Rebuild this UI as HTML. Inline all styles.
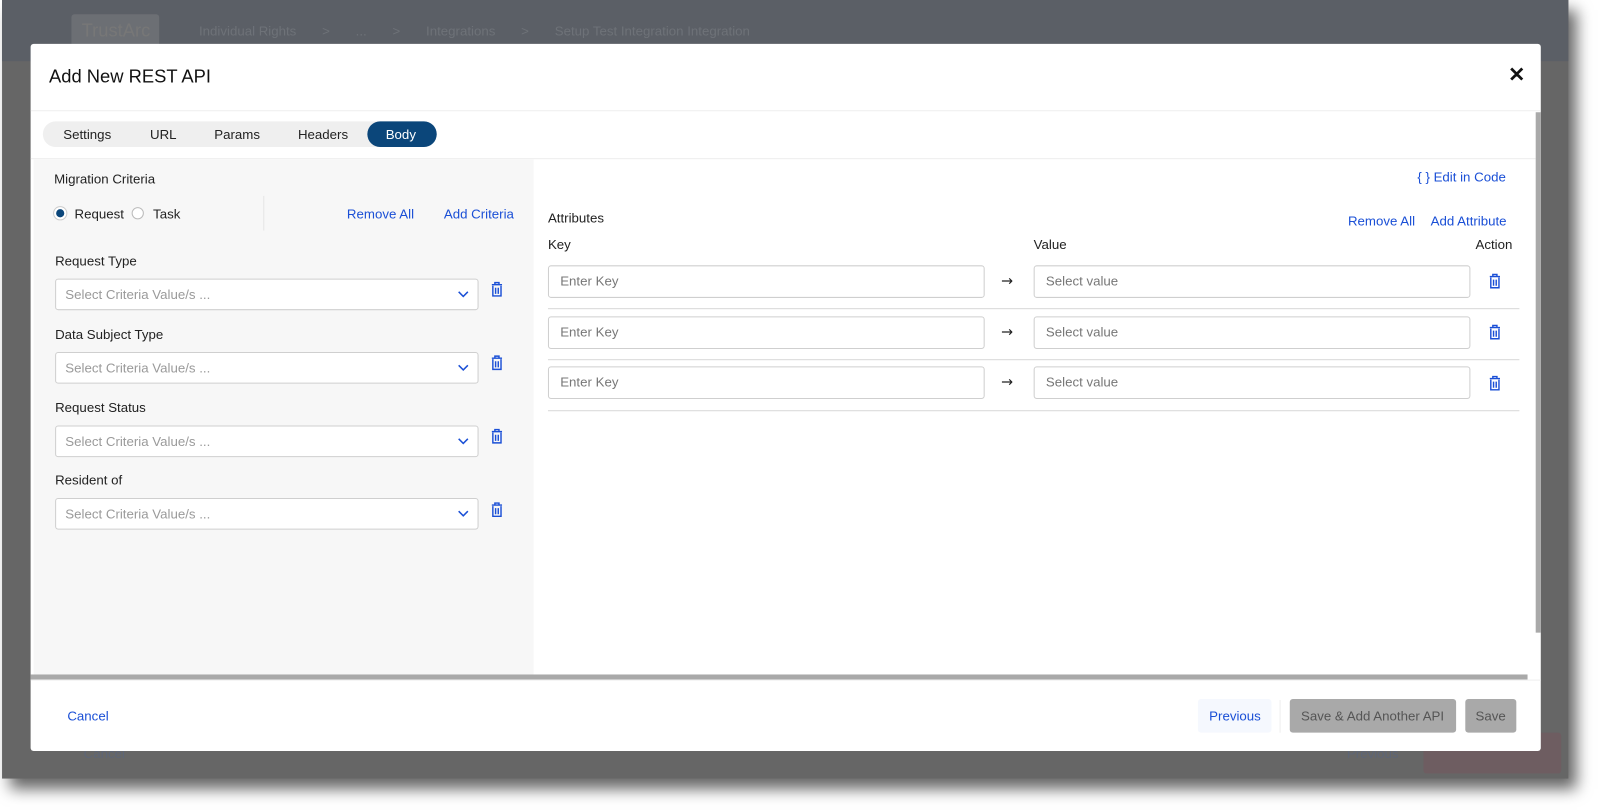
<!DOCTYPE html>
<html><head><meta charset="utf-8"><style>
html,body{margin:0;padding:0;width:1600px;height:810px;overflow:hidden;background:#fff;font-family:"Liberation Sans",sans-serif;}
#w{position:absolute;left:0;top:0;width:1568px;height:794px;transform:scale(1.0204);transform-origin:0 0;}
.a{position:absolute;}
.t{position:absolute;font-size:13px;color:#222;white-space:nowrap;line-height:16px;}
.b{color:#1a4fd6;}
.sel{position:absolute;background:#fff;border:1px solid #cfcfcf;border-radius:3px;box-sizing:border-box;}
.ph{position:absolute;left:9px;top:7px;font-size:13px;color:#9a9a9a;white-space:nowrap;}
.ar{position:absolute;font-family:"DejaVu Sans",sans-serif;font-size:14px;color:#222;line-height:16px;}
</style></head><body><div id="w">
<div class="a" style="left:2px;top:0;width:1535px;height:763px;background:#666;box-shadow:8px 10px 14px rgba(0,0,0,0.6);"></div>
<div class="a" style="left:2px;top:0;width:1535px;height:60px;background:#5b5f66;"></div>
<div class="a" style="left:70px;top:14px;width:86px;height:34px;background:#6c6f74;border-radius:3px;"></div>
<div class="t" style="left:80px;top:22px;font-size:18px;color:#777;">TrustArc</div>
<div class="t" style="left:195px;top:23px;color:#6e7278;">Individual Rights &nbsp;&nbsp;&nbsp;&nbsp;&nbsp;&nbsp;&gt; &nbsp;&nbsp;&nbsp;&nbsp;&nbsp;&nbsp;... &nbsp;&nbsp;&nbsp;&nbsp;&nbsp;&nbsp;&gt; &nbsp;&nbsp;&nbsp;&nbsp;&nbsp;&nbsp;Integrations &nbsp;&nbsp;&nbsp;&nbsp;&nbsp;&nbsp;&gt; &nbsp;&nbsp;&nbsp;&nbsp;&nbsp;&nbsp;Setup Test Integration Integration</div>
<div class="a" style="left:1395px;top:718px;width:135px;height:40px;background:#6e5d61;border-radius:3px;"></div>
<div class="t" style="left:1320px;top:731px;color:#5d6576;">Previous</div>
<div class="t" style="left:82px;top:731px;color:#5d6576;">Cancel</div>

<div class="a" style="left:30px;top:43px;width:1480px;height:693px;background:#fff;border-radius:3px;overflow:hidden;">
</div>
<div class="t" style="left:48px;top:65px;font-size:18px;line-height:20px;color:#111;">Add New REST API</div>
<div class="t" style="left:1478px;top:66px;font-size:20px;font-weight:bold;color:#111;">✕</div>
<div class="a" style="left:30px;top:108px;width:1480px;height:1px;background:#eee;"></div>
<div class="a" style="left:42px;top:119px;width:386px;height:25px;background:#efefef;border-radius:13px;"></div>
<div class="a" style="left:360px;top:119px;width:68px;height:25px;background:#0b467a;border-radius:13px;"></div>
<div class="t" style="left:62px;top:124px;">Settings</div>
<div class="t" style="left:147px;top:124px;">URL</div>
<div class="t" style="left:210px;top:124px;">Params</div>
<div class="t" style="left:292px;top:124px;">Headers</div>
<div class="t" style="left:378px;top:124px;color:#fff;">Body</div>
<div class="a" style="left:30px;top:155px;width:1475px;height:1px;background:#eee;"></div>
<div class="a" style="left:1505px;top:110px;width:5px;height:510px;background:#a9a9a9;"></div>
<div class="a" style="left:33px;top:156px;width:490px;height:505px;background:#f7f7f7;"></div>

<div class="t" style="left:53px;top:168px;">Migration Criteria</div>
<div class="a" style="left:53px;top:203px;width:12px;height:12px;border-radius:50%;background:#0b467a;box-shadow:0 0 0 1px #ccc;border:2px solid #fff;box-sizing:border-box;"></div>
<div class="t" style="left:73px;top:202px;">Request</div>
<div class="a" style="left:129px;top:203px;width:12px;height:12px;border-radius:50%;border:1px solid #bbb;background:#fff;box-sizing:border-box;"></div>
<div class="t" style="left:150px;top:202px;">Task</div>
<div class="a" style="left:258px;top:192px;width:1px;height:34px;background:#e6e6e6;"></div>
<div class="t b" style="left:340px;top:202px;">Remove All</div>
<div class="t b" style="left:435px;top:202px;">Add Criteria</div>

<div class="t" style="left:54px;top:248px;">Request Type</div>
<div class="sel" style="left:54px;top:273px;width:415px;height:31px;"><div class="ph">Select Criteria Value/s ...</div></div>
<div class="t" style="left:54px;top:320px;">Data Subject Type</div>
<div class="sel" style="left:54px;top:345px;width:415px;height:31px;"><div class="ph">Select Criteria Value/s ...</div></div>
<div class="t" style="left:54px;top:392px;">Request Status</div>
<div class="sel" style="left:54px;top:417px;width:415px;height:31px;"><div class="ph">Select Criteria Value/s ...</div></div>
<div class="t" style="left:54px;top:463px;">Resident of</div>
<div class="sel" style="left:54px;top:488px;width:415px;height:31px;"><div class="ph">Select Criteria Value/s ...</div></div>

<svg class="a" style="left:0;top:0;" width="1568" height="794">
<defs>
<g id="tr" fill="none" stroke="#1a4fd6" stroke-width="1.4"><path d="M-5 -5H5M-2 -5V-7H2V-5M-4 -4V6H4V-4M-1.3 -2V4M1.3 -2V4"/></g>
<g id="ch" fill="none" stroke="#1a4fd6" stroke-width="1.5"><path d="M-4.5 -2L0 2.5L4.5 -2"/></g>
</defs>
<use href="#ch" x="454" y="288"/><use href="#ch" x="454" y="360"/><use href="#ch" x="454" y="432"/><use href="#ch" x="454" y="503"/>
<use href="#tr" x="487" y="284"/><use href="#tr" x="487" y="356"/><use href="#tr" x="487" y="428"/><use href="#tr" x="487" y="500"/>
<use href="#tr" x="1465" y="276"/><use href="#tr" x="1465" y="326"/><use href="#tr" x="1465" y="376"/>
</svg>

<div class="t b" style="left:1389px;top:166px;">{ } Edit in Code</div>
<div class="t" style="left:537px;top:206px;">Attributes</div>
<div class="t b" style="left:1321px;top:209px;">Remove All</div>
<div class="t b" style="left:1402px;top:209px;">Add Attribute</div>
<div class="t" style="left:537px;top:232px;">Key</div>
<div class="t" style="left:1013px;top:232px;">Value</div>
<div class="t" style="left:1446px;top:232px;">Action</div>

<div class="sel" style="left:537px;top:260px;width:428px;height:32px;"><div class="ph" style="left:11px;color:#777;">Enter Key</div></div>
<div class="ar" style="left:981px;top:268px;">→</div>
<div class="sel" style="left:1013px;top:260px;width:428px;height:32px;"><div class="ph" style="left:11px;color:#777;">Select value</div></div>
<div class="a" style="left:537px;top:302px;width:952px;height:1px;background:#d8d8d8;"></div>
<div class="sel" style="left:537px;top:310px;width:428px;height:32px;"><div class="ph" style="left:11px;color:#777;">Enter Key</div></div>
<div class="ar" style="left:981px;top:318px;">→</div>
<div class="sel" style="left:1013px;top:310px;width:428px;height:32px;"><div class="ph" style="left:11px;color:#777;">Select value</div></div>
<div class="a" style="left:537px;top:352px;width:952px;height:1px;background:#d8d8d8;"></div>
<div class="sel" style="left:537px;top:359px;width:428px;height:32px;"><div class="ph" style="left:11px;color:#777;">Enter Key</div></div>
<div class="ar" style="left:981px;top:367px;">→</div>
<div class="sel" style="left:1013px;top:359px;width:428px;height:32px;"><div class="ph" style="left:11px;color:#777;">Select value</div></div>
<div class="a" style="left:537px;top:402px;width:952px;height:1px;background:#d8d8d8;"></div>

<div class="a" style="left:30px;top:661px;width:1467px;height:5px;background:#a9a9a9;"></div>
<div class="a" style="left:30px;top:666px;width:1480px;height:1px;background:#eee;"></div>
<div class="t b" style="left:66px;top:694px;">Cancel</div>
<div class="a" style="left:1174px;top:685px;width:72px;height:33px;background:#f5f8fe;border-radius:3px;"></div>
<div class="t b" style="left:1185px;top:694px;">Previous</div>
<div class="a" style="left:1254px;top:686px;width:1px;height:32px;background:#eee;"></div>
<div class="a" style="left:1264px;top:685px;width:163px;height:33px;background:#a9a9a9;border-radius:3px;"></div>
<div class="t" style="left:1275px;top:694px;color:#555;">Save &amp; Add Another API</div>
<div class="a" style="left:1436px;top:685px;width:50px;height:33px;background:#a9a9a9;border-radius:3px;"></div>
<div class="t" style="left:1446px;top:694px;color:#555;">Save</div>
</div></body></html>
